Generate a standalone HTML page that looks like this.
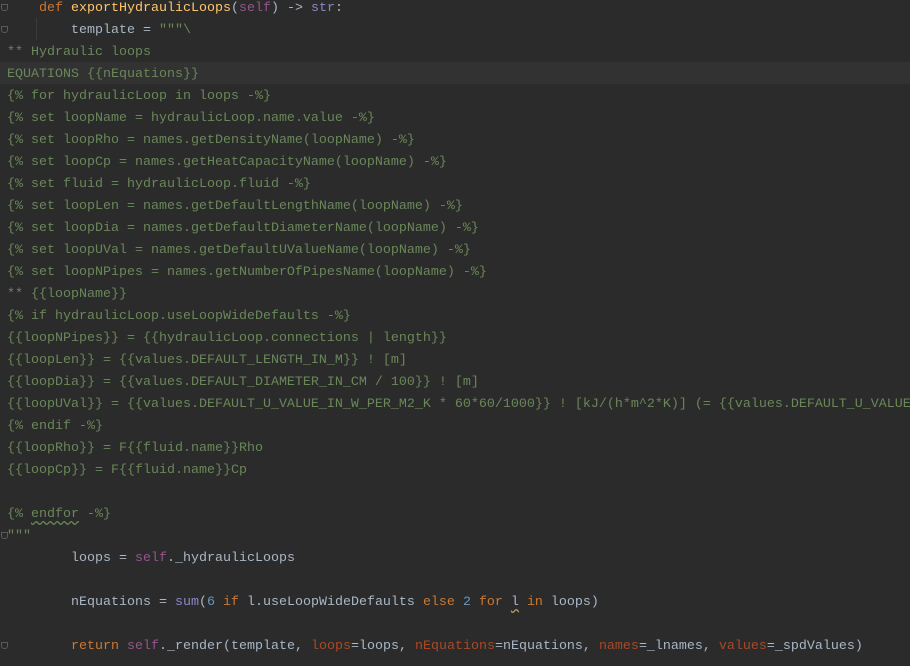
<!DOCTYPE html>
<html><head><style>
html,body{margin:0;padding:0;background:#2b2b2b;width:910px;height:666px;overflow:hidden}
.cur{position:absolute;left:0;top:62px;width:910px;height:22px;background:#323232}
.guide{position:absolute;left:36px;top:18px;width:1px;height:22px;background:#3b3b3b}
.gut{position:absolute;left:0;top:0;width:2px;height:666px;background:#313335}
pre{position:absolute;left:7px;top:-2px;width:903px;overflow:hidden;margin:0;font-family:"Liberation Mono",monospace;font-size:13.33px;line-height:22px;color:#a9b7c6;white-space:pre}
.g{color:#6a8759}.k{color:#cc7832}.f{color:#ffc66d}.s{color:#94558d}.b{color:#8888c6}.n{color:#6897bb}.a{color:#aa4926}
.w{text-decoration:underline wavy #6a8759;text-underline-offset:3px}
.fold{position:absolute;left:1px;width:7px;height:7px;border:1px solid #5a5a5a;border-radius:0 0 3px 3px;box-sizing:border-box}
</style></head><body>
<div class="cur"></div>
<div class="guide"></div>
<div class="fold" style="top:4px"></div>
<div class="fold" style="top:26px"></div>
<div class="fold" style="top:532px"></div>
<div class="fold" style="top:642px"></div>
<pre>    <span class="k">def</span> <span class="f">exportHydraulicLoops</span>(<span class="s">self</span>) -&gt; <span class="b">str</span>:
        template = <span class="g">"""\</span>
<span class="g">** Hydraulic loops
EQUATIONS {{nEquations}}
{% for hydraulicLoop in loops -%}
{% set loopName = hydraulicLoop.name.value -%}
{% set loopRho = names.getDensityName(loopName) -%}
{% set loopCp = names.getHeatCapacityName(loopName) -%}
{% set fluid = hydraulicLoop.fluid -%}
{% set loopLen = names.getDefaultLengthName(loopName) -%}
{% set loopDia = names.getDefaultDiameterName(loopName) -%}
{% set loopUVal = names.getDefaultUValueName(loopName) -%}
{% set loopNPipes = names.getNumberOfPipesName(loopName) -%}
** {{loopName}}
{% if hydraulicLoop.useLoopWideDefaults -%}
{{loopNPipes}} = {{hydraulicLoop.connections | length}}
{{loopLen}} = {{values.DEFAULT_LENGTH_IN_M}} ! [m]
{{loopDia}} = {{values.DEFAULT_DIAMETER_IN_CM / 100}} ! [m]
{{loopUVal}} = {{values.DEFAULT_U_VALUE_IN_W_PER_M2_K * 60*60/1000}} ! [kJ/(h*m^2*K)] (= {{values.DEFAULT_U_VALUE</span>
<span class="g">{% endif -%}
{{loopRho}} = F{{fluid.name}}Rho
{{loopCp}} = F{{fluid.name}}Cp

{% <span class="w">endfor</span> -%}
"""</span>
        loops = <span class="s">self</span>._hydraulicLoops

        nEquations = <span class="b">sum</span>(<span class="n">6</span> <span class="k">if</span> l.useLoopWideDefaults <span class="k">else</span> <span class="n">2</span> <span class="k">for</span> <span style="text-decoration:underline wavy #b0a060;text-underline-offset:3px">l</span> <span class="k">in</span> loops)

        <span class="k">return</span> <span class="s">self</span>._render(template, <span class="a">loops</span>=loops, <span class="a">nEquations</span>=nEquations, <span class="a">names</span>=_lnames, <span class="a">values</span>=_spdValues)
</pre>
</body></html>
